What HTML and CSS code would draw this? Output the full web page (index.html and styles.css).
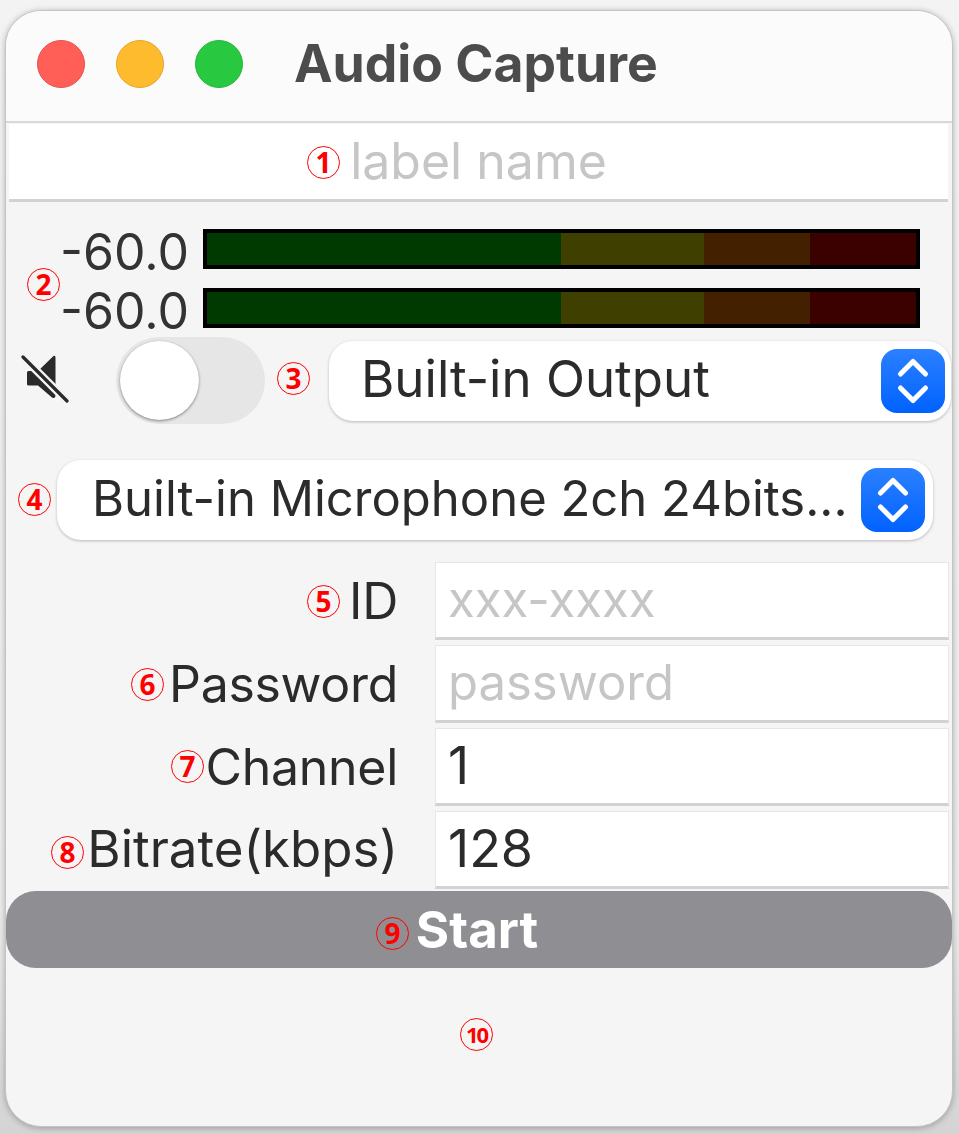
FILE: index.html
```html
<!DOCTYPE html>
<html lang="en">
<head>
<meta charset="utf-8">
<title>Audio Capture</title>
<link rel="stylesheet" href="styles.css">
</head>
<body>
<main class="window">
  <header class="titlebar">
    <div class="lights">
      <span class="light red"></span>
      <span class="light yellow"></span>
      <span class="light green"></span>
    </div>
    <h1 class="title">Audio Capture</h1>
  </header>

  <div class="name-field">label name</div>

  <section class="meters">
    <div class="meter-row">
      <span class="db">-60.0</span>
      <div class="meter"><i class="seg s-green"></i><i class="seg s-yellow"></i><i class="seg s-orange"></i><i class="seg s-red"></i></div>
    </div>
    <div class="meter-row">
      <span class="db">-60.0</span>
      <div class="meter"><i class="seg s-green"></i><i class="seg s-yellow"></i><i class="seg s-orange"></i><i class="seg s-red"></i></div>
    </div>
  </section>

  <section class="output-row">
    <svg class="mute" viewBox="0 0 48 48" width="48" height="48" aria-hidden="true">
      <path d="M7.5 16 H17 L32.5 1 Q34.5 0 34.5 2.5 V41 Q34 44 31 42.5 L17 30.5 H7.5 Q6 30.5 6 29 V17.5 Q6 16 7.5 16 Z" fill="#2a2a2a"/>
      <path d="M1 1 L47 47" stroke="#f5f5f5" stroke-width="8" fill="none"/>
      <path d="M2 2 L46 46" stroke="#2a2a2a" stroke-width="3.2" stroke-linecap="round" fill="none"/>
    </svg>
    <div class="toggle"><span class="knob"></span></div>
    <div class="select select-output">
      <span class="select-text">Built-in Output</span>
      <span class="stepper"><svg viewBox="0 0 64 64" width="64" height="64" aria-hidden="true"><path d="M19.5 25 L32 12.5 L44.5 25 M19.5 39 L32 51.5 L44.5 39" fill="none" stroke="#fff" stroke-width="5" stroke-linecap="round" stroke-linejoin="round"/></svg></span>
    </div>
  </section>

  <div class="select select-input">
    <span class="select-text">Built-in Microphone 2ch 24bits...</span>
    <span class="stepper"><svg viewBox="0 0 64 64" width="64" height="64" aria-hidden="true"><path d="M19.5 25 L32 12.5 L44.5 25 M19.5 39 L32 51.5 L44.5 39" fill="none" stroke="#fff" stroke-width="5" stroke-linecap="round" stroke-linejoin="round"/></svg></span>
  </div>

  <section class="form">
    <label class="form-label">ID</label><div class="field placeholder">xxx-xxxx</div>
    <label class="form-label">Password</label><div class="field placeholder">password</div>
    <label class="form-label">Channel</label><div class="field">1</div>
    <label class="form-label wide">Bitrate(kbps)</label><div class="field">128</div>
  </section>

  <button class="start">Start</button>

  <span class="badge b1">1</span>
  <span class="badge b2">2</span>
  <span class="badge b3">3</span>
  <span class="badge b4">4</span>
  <span class="badge b5">5</span>
  <span class="badge b6">6</span>
  <span class="badge b7">7</span>
  <span class="badge b8">8</span>
  <span class="badge b9">9</span>
  <span class="badge b10">10</span>
</main>
</body>
</html>
```
FILE: styles.css
```css
* { box-sizing: border-box; }
html, body { margin: 0; height: 100%; }
body {
  width: 959px;
  height: 1134px;
  overflow: hidden;
  padding: 10px 6px 7px 5px;
  background: linear-gradient(#f3f3f3, #ececec 80%, #d4d4d4);
  font-family: Inter, "Noto Sans", sans-serif;
  color: #2b2b2b;
}
.window {
  position: relative;
  width: 948px;
  height: 1117px;
  background: #f5f5f5;
  border-radius: 36px;
  border: 1px solid #c4c4c4;
  box-shadow: 0 1px 6px rgba(0,0,0,.28);
  overflow: hidden;
}
.titlebar {
  height: 112px;
  background: #fbfbfb;
  border-bottom: 2px solid #d9d9d9;
  display: flex;
  align-items: center;
  padding: 0 0 4px 31px;
}
.lights { display: flex; gap: 31px; }
.light { width: 48px; height: 48px; border-radius: 50%; }
.red { background: #ff5f57; border: 1px solid #e5524b; }
.yellow { background: #febb2e; border: 1px solid #e5a62a; }
.green { background: #28c840; border: 1px solid #25b83a; }
.title {
  margin: 0 0 0 51px;
  font-size: 51.7px;
  font-weight: 700;
  color: #4c4c4c;
  line-height: 1;
  white-space: nowrap;
}
.name-field {
  height: 78px;
  margin: 1px 4px 0 3px;
  background: #fff;
  border-bottom: 3px solid #d2d2d2;
  text-align: center;
  font-size: 50px;
  line-height: 74px;
  color: #c6c6c6;
}
.meters {
  margin-top: 27px;
  display: flex;
  flex-direction: column;
  gap: 19px;
}
.meter-row { display: flex; align-items: center; height: 40px; }
.db {
  width: 183px;
  text-align: right;
  font-size: 50px;
  line-height: 40px;
  color: #333;
  position: relative;
  top: 3px;
}
.meter {
  margin-left: 14px;
  width: 717px;
  height: 40px;
  border: 4px solid #000;
  display: flex;
}
.seg { display: block; height: 100%; }
.s-green { width: 354px; background: #003a00; }
.s-yellow { width: 143px; background: #3f3f00; }
.s-orange { width: 106px; background: #432000; }
.s-red { flex: 1; background: #3b0000; }
.output-row {
  margin-top: 9px;
  height: 87px;
  display: flex;
  align-items: center;
  position: relative;
}
.mute { margin: 0 0 4px 15px; flex: none; }
.toggle {
  flex: none;
  margin-left: 47px;
  width: 149px;
  height: 87px;
  border-radius: 44px;
  background: #e6e6e6;
  padding: 4px;
}
.knob {
  display: block;
  width: 79px;
  height: 79px;
  border-radius: 50%;
  background: #fff;
  box-shadow: 0 1px 3px rgba(0,0,0,.45);
}
.select {
  display: flex;
  align-items: center;
  height: 80px;
  background: #fff;
  border-radius: 24px;
  box-shadow: 0 1px 3px rgba(0,0,0,.25);
}
.select-text { flex: 1; white-space: nowrap; color: #2b2b2b; position: relative; top: -2px; }
.select-output { width: 622px; margin-left: 64px; padding: 0 6px 0 32px; font-size: 51px; }
.select-input { width: 876px; margin: 36px 0 0 51px; padding: 0 8px 0 35px; font-size: 49px; }
.stepper {
  flex: none;
  width: 64px;
  height: 64px;
  border-radius: 16px;
  background: linear-gradient(#2b80ff, #0062ff);
}
.stepper svg { display: block; }
.form {
  margin-top: 22px;
  display: grid;
  grid-template-columns: 392px 514px;
  grid-auto-rows: 76px;
  column-gap: 37px;
  row-gap: 7px;
}
.form-label {
  text-align: right;
  font-size: 50px;
  line-height: 78px;
  letter-spacing: -0.3px;
  color: #2b2b2b;
  white-space: nowrap;
}
.wide { font-size: 51px; letter-spacing: 0; line-height: 76px; }
.field {
  height: 78px;
  background: #fff;
  border: 1px solid #e6e6e6;
  border-bottom: 3px solid #d2d2d2;
  padding-left: 12px;
  font-size: 52px;
  line-height: 74px;
  color: #2b2b2b;
}
.placeholder { color: #c6c6c6; font-size: 49px; }
.start {
  display: block;
  width: 946px;
  height: 77px;
  margin: 4px 0 0 0;
  border: none;
  border-radius: 30px;
  background: #8e8e93;
  color: #fff;
  font: 700 51px/1 Inter, "Noto Sans", sans-serif;
  padding: 0 4px 0 0;
  position: relative;
}
.badge {
  position: absolute;
  width: 33px;
  height: 33px;
  border: 1px solid #f00;
  border-radius: 50%;
  color: #f00;
  font: 700 28px/31px "Noto Sans", sans-serif;
  text-align: center;
  background: transparent;
}
.b1 { left: 301px; top: 135px; }
.b2 { left: 21px; top: 257px; }
.b3 { left: 271px; top: 351px; }
.b4 { left: 12px; top: 472px; }
.b5 { left: 301px; top: 574px; }
.b6 { left: 125px; top: 657px; }
.b7 { left: 165px; top: 739px; }
.b8 { left: 45px; top: 825px; }
.b9 { left: 370px; top: 906px; }
.b10 { left: 454px; top: 1007px; letter-spacing: -2px; font-size: 22px; }
```
